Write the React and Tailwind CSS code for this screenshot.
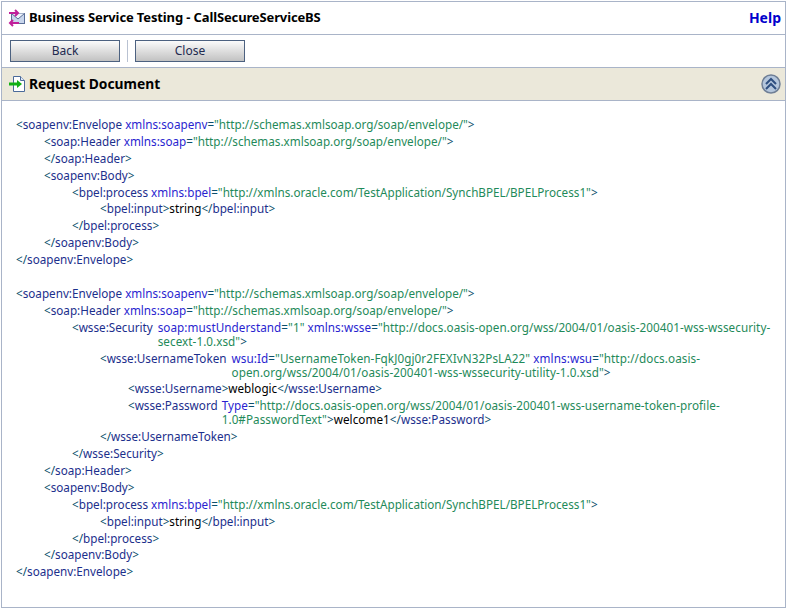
const INDENTS = ['pl-0', 'pl-7', 'pl-14', 'pl-[84px]', 'pl-28']

const Tag = ({ children }) => <span className="text-[#1c2f8c]">{children}</span>
const Br = ({ children }) => <span className="text-[#0b4f6c]">{children}</span>
const Val = ({ children }) => <span className="text-[#1f8a5a]">{children}</span>
const Txt = ({ children }) => <span className="text-black">{children}</span>
const Attr = ({ name, value }) => (
  <>
    <span className="text-[#2a1fd0]">{name}</span>
    <Br>=</Br>
    <Val>{value}</Val>
  </>
)

// rows are 14px per text line plus about 3px of padding
const Row = ({ level = 0, children }) => (
  <div className={`flex whitespace-pre pt-[2px] pb-[0.9px] ${INDENTS[level]}`}>{children}</div>
)

const Open = ({ level = 0, name, attrClass = '', children }) => (
  <Row level={level}>
    <span><Br>&lt;</Br><Tag>{name}</Tag> </span>
    <div className={attrClass}>{children}</div>
  </Row>
)

const Empty = ({ level, name }) => (
  <Row level={level}><span><Br>&lt;</Br><Tag>{name}</Tag><Br>&gt;</Br></span></Row>
)

const Close = ({ level, name }) => (
  <Row level={level}><span><Br>&lt;/</Br><Tag>{name}</Tag><Br>&gt;</Br></span></Row>
)

const Leaf = ({ level, name, text }) => (
  <Row level={level}>
    <span><Br>&lt;</Br><Tag>{name}</Tag><Br>&gt;</Br><Txt>{text}</Txt><Br>&lt;/</Br><Tag>{name}</Tag><Br>&gt;</Br></span>
  </Row>
)

const ENV = '"http://schemas.xmlsoap.org/soap/envelope/"'
const BPEL = '"http://xmlns.oracle.com/TestApplication/SynchBPEL/BPELProcess1"'

const EnvelopeOpen = () => (
  <>
    <Open name="soapenv:Envelope"><Attr name="xmlns:soapenv" value={ENV} /><Br>&gt;</Br></Open>
    <Open level={1} name="soap:Header"><Attr name="xmlns:soap" value={ENV} /><Br>&gt;</Br></Open>
  </>
)

const BodyBlock = () => (
  <>
    <Empty level={1} name="soapenv:Body" />
    <Open level={2} name="bpel:process"><Attr name="xmlns:bpel" value={BPEL} /><Br>&gt;</Br></Open>
    <Leaf level={3} name="bpel:input" text="string" />
    <Close level={2} name="bpel:process" />
    <Close level={1} name="soapenv:Body" />
    <Close level={0} name="soapenv:Envelope" />
  </>
)

const BUTTON = 'w-[110px] h-[22px] border border-[#4c6180] bg-gradient-to-b from-[#fbfbfb] to-[#c2c2c2] text-[12px] text-[#222a50] leading-none'

export default function App() {
  return (
    <div className="w-[788px] h-[608px] bg-white pt-px pl-px font-['Noto_Sans',sans-serif]">
      <div className="w-[785px] h-[607px] border border-[#a9b4c8] flex flex-col">
        <div className="h-[33px] shrink-0 border-b border-[#a9b4c8] flex items-center pl-[6px] pr-[4px]">
          <svg width="18" height="18" viewBox="0 0 18 18" className="mr-[3px]">
            <rect x="3.5" y="4.5" width="13" height="10" fill="#c9d6ec" stroke="#5a6f98" />
            <path d="M3.5 4.5l6.5 5.5 6.5-5.5" fill="#eef3fb" stroke="#5a6f98" />
            <path d="M1 4h9M7 1l3 3-3 3" fill="none" stroke="#c0209a" strokeWidth="2" />
            <path d="M2 14h9M5 11l-3 3 3 3" fill="none" stroke="#c0209a" strokeWidth="2" />
          </svg>
          <span className="text-[13px] tracking-[-0.13px] font-bold text-black">Business Service Testing - CallSecureServiceBS</span>
          <a className="ml-auto mb-[2px] text-[14px] font-bold text-[#0000cc]">Help</a>
        </div>
        <div className="h-[33px] shrink-0 border-b border-[#a9b4c8] flex items-center pl-2">
          <button className={BUTTON}>Back</button>
          <div className="w-px h-[22px] bg-[#b9c2d2] mx-[7px]" />
          <button className={BUTTON}>Close</button>
        </div>
        <div className="h-[33px] shrink-0 border-b border-[#a9b4c8] bg-[#ebe8da] flex items-center pl-[6px] pr-[4px]">
          <svg width="18" height="18" viewBox="0 0 18 18" className="mr-[3px]">
            <path d="M5.5 1.5h7l4 4v11h-11z" fill="#fff" stroke="#4a6a9a" />
            <path d="M12.5 1.5v4h4" fill="#dfe8f5" stroke="#4a6a9a" />
            <path d="M1 9h9" stroke="#12b012" strokeWidth="3" />
            <path d="M9 5l5 4-5 4z" fill="#12b012" />
          </svg>
          <span className="text-[13.8px] font-bold text-black">Request Document</span>
          <svg width="20" height="20" viewBox="0 0 20 20" className="ml-auto">
            <circle cx="10" cy="10" r="9" fill="#b4c6dc" stroke="#6f7f96" strokeWidth="1.5" />
            <path d="M5 10l5-5 5 5M5 15l5-5 5 5" fill="none" stroke="#2e4f80" strokeWidth="2" />
          </svg>
        </div>
        <div className="flex-1 pl-[14px] pt-[14px] text-[11.7px] leading-[14px]">
          <EnvelopeOpen />
          <Close level={1} name="soap:Header" />
          <BodyBlock />
          <div className="h-[16.9px]" />
          <EnvelopeOpen />
          <Open level={2} name="wsse:Security" attrClass="ml-[2px] tracking-[0.05px]">
            <div><Attr name="soap:mustUnderstand" value={'"1"'} /> <Attr name="xmlns:wsse" value={'"http://docs.oasis-open.org/wss/2004/01/oasis-200401-wss-wssecurity-'} /></div>
            <div><Val>secext-1.0.xsd"</Val><Br>&gt;</Br></div>
          </Open>
          <Open level={3} name="wsse:UsernameToken" attrClass="ml-[2px] tracking-[0.08px]">
            <div><Attr name="wsu:Id" value={'"UsernameToken-FqkJ0gj0r2FEXIvN32PsLA22"'} /> <Attr name="xmlns:wsu" value={'"http://docs.oasis-'} /></div>
            <div><Val>open.org/wss/2004/01/oasis-200401-wss-wssecurity-utility-1.0.xsd"</Val><Br>&gt;</Br></div>
          </Open>
          <Leaf level={4} name="wsse:Username" text="weblogic" />
          <Open level={4} name="wsse:Password" attrClass="ml-px tracking-[0.05px]">
            <div><Attr name="Type" value={'"http://docs.oasis-open.org/wss/2004/01/oasis-200401-wss-username-token-profile-'} /></div>
            <div><Val>1.0#PasswordText"</Val><Br>&gt;</Br><Txt>welcome1</Txt><Br>&lt;/</Br><Tag>wsse:Password</Tag><Br>&gt;</Br></div>
          </Open>
          <Close level={3} name="wsse:UsernameToken" />
          <Close level={2} name="wsse:Security" />
          <Close level={1} name="soap:Header" />
          <BodyBlock />
        </div>
      </div>
    </div>
  )
}
